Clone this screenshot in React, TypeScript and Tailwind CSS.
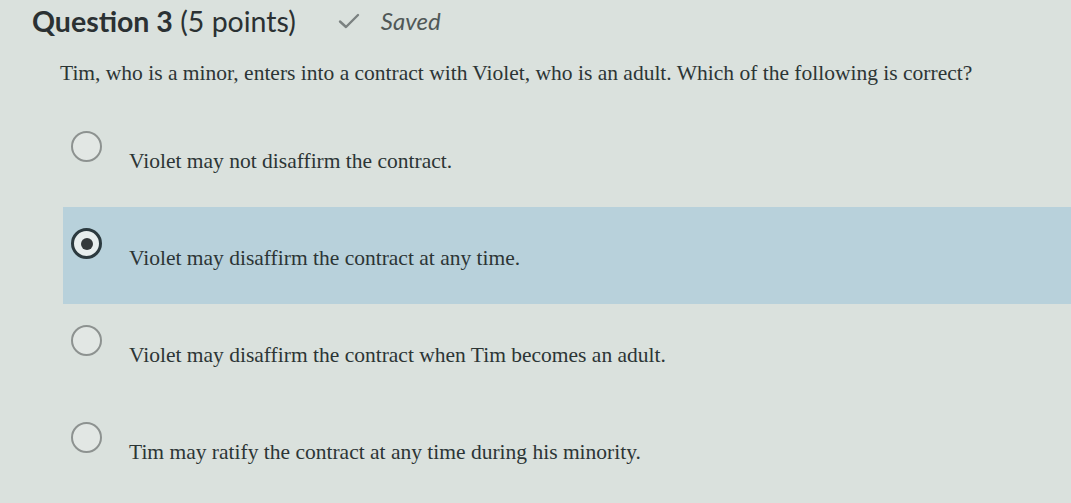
import React from 'react';

const options = [
  'Violet may not disaffirm the contract.',
  'Violet may disaffirm the contract at any time.',
  'Violet may disaffirm the contract when Tim becomes an adult.',
  'Tim may ratify the contract at any time during his minority.',
];

function Radio({ checked }: { checked: boolean }) {
  if (checked) {
    return (
      <span className="w-[31px] h-[31px] rounded-full border-[3px] border-[#2c3a3f] bg-[#e8eeee] flex items-center justify-center shrink-0">
        <span className="block w-[12px] h-[12px] rounded-full bg-[#34393b]" />
      </span>
    );
  }
  return <span className="block w-[31px] h-[31px] rounded-full border-2 border-[#8d9290] bg-[#e2e7e4] shrink-0" />;
}

export default function App() {
  const selected = 1;
  return (
    <div className="w-[1071px] h-[503px] overflow-hidden bg-[#dae1dd] text-[#2c3535]">
      {/* header */}
      <div className="flex items-center h-[40px] pl-[32px] pt-[2px] font-['Lato',sans-serif]">
        <h2 className="text-[28.5px] text-[#2b3133]">
          <span className="font-bold">Question 3</span> <span>(5 points)</span>
        </h2>
        <span className="ml-[42px] flex items-center gap-[21px] text-[#505857]">
          <svg width="22" height="18" viewBox="0 0 22 18" fill="none">
            <path d="M2 9.5 L8 15 L20 3" stroke="#7b8281" strokeWidth="2.4" strokeLinecap="round" strokeLinejoin="round" />
          </svg>
          <span className="italic text-[24px]">Saved</span>
        </span>
      </div>

      {/* question */}
      <p className="pl-[60px] mt-[20px] text-[21.5px] leading-[26px] font-['Liberation_Serif',serif]">
        Tim, who is a minor, enters into a contract with Violet, who is an adult. Which of the following is correct?
      </p>

      {/* answers */}
      <div className="mt-[24px] ml-[63px] font-['Liberation_Serif',serif]">
        {options.map((text, i) => (
          <label
            key={i}
            className={`flex h-[97px] pl-[5px] ${i === selected ? 'bg-[#b8d1db]' : ''}`}
          >
            <span className="block pt-[21px] pl-[3px]">
              <Radio checked={i === selected} />
            </span>
            <span className="pt-[38px] pl-[27px] text-[21.5px] leading-[26px]">{text}</span>
          </label>
        ))}
      </div>
    </div>
  );
}
